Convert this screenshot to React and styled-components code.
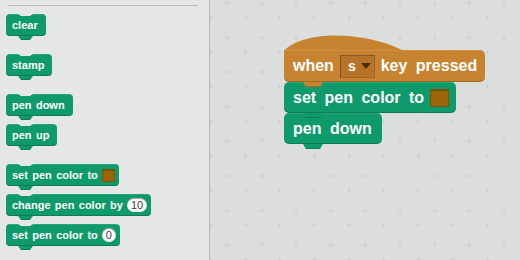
import React from 'react';
import styled, { createGlobalStyle, css } from 'styled-components';

const PEN = '#0f9a6c';
const PEN_DARK = '#0b7d57';
const EVENT = '#c88330';
const EVENT_DARK = '#a86b22';
const PALETTE_BG = '#e5e6e6';
const CANVAS_BG = '#dcdede';

const SIZES = {
  sm: { h: 22, font: 11, ws: 1.3, padL: 6, padR: 8, padRIn: 4, gap: 4, radius: 4, bumpL: 12, bumpW: 15, bumpH: 4, notchH: 2 },
  lg: { h: 31, font: 16, ws: 4, padL: 9, padR: 10, padRIn: 7, gap: 6, radius: 5, bumpL: 19, bumpW: 20, bumpH: 5, notchH: 3 },
};

const Global = createGlobalStyle`
  html, body { margin: 0; padding: 0; background: ${CANVAS_BG}; }
  body { font-family: "Liberation Sans", Arial, sans-serif; overflow: hidden; }
`;

const gridSvg = encodeURIComponent(
  `<svg xmlns="http://www.w3.org/2000/svg" width="34.6" height="34.6"><g stroke="#ccd0d0" stroke-width="1" fill="none"><path d="M4 1.5v5M1.5 4h5"/><path d="M22.3 16.1v5M19.8 18.6h5"/></g></svg>`
);

const Page = styled.div`
  display: grid;
  grid-template-columns: 210px 1fr;
  width: 520px;
  height: 260px;
  overflow: hidden;
`;

const Palette = styled.aside`
  box-sizing: border-box;
  background: ${PALETTE_BG};
  border-right: 1px solid #b7b9b9;
  display: flex;
  flex-direction: column;
  padding: 5px 0 0 6px;
`;

const Rule = styled.div`
  height: 1px;
  background: #bcbdbd;
  margin: 0 11px 0 2px;
`;

const BlockList = styled.div`
  display: flex;
  flex-direction: column;
  align-items: flex-start;
  gap: 18px;
  margin-top: 8px;
`;

const Group = styled.div`
  display: flex;
  flex-direction: column;
  align-items: flex-start;
  gap: 8px;
`;

const Canvas = styled.main`
  background-color: ${CANVAS_BG};
  background-image: url("data:image/svg+xml,${gridSvg}");
  background-size: 34.6px 34.6px;
  background-position: 13px -1px;
  padding: 35px 0 0 74px;
`;

const Script = styled.div`
  display: flex;
  flex-direction: column;
  align-items: flex-start;
`;

const Block = styled.div`
  position: relative;
  box-sizing: border-box;
  display: inline-flex;
  align-items: center;
  gap: ${p => SIZES[p.$size].gap}px;
  height: ${p => SIZES[p.$size].h + (p.$hat ? 1 : 0)}px;
  padding: 0 ${p => (p.$input ? SIZES[p.$size].padRIn : p.$hat ? SIZES[p.$size].padR - 2 : SIZES[p.$size].padR)}px 0 ${p => SIZES[p.$size].padL}px;
  background: ${p => p.$color};
  border-radius: ${p => (p.$hat ? `0 ${SIZES[p.$size].radius}px ${SIZES[p.$size].radius}px ${SIZES[p.$size].radius}px` : `${SIZES[p.$size].radius}px`)};
  color: #fff;
  font-weight: bold;
  font-size: ${p => SIZES[p.$size].font}px;
  word-spacing: ${p => SIZES[p.$size].ws}px;
  white-space: nowrap;
  box-shadow: inset 0 -1px 0 rgba(0, 0, 0, 0.2), inset 0 1px 0 rgba(255, 255, 255, 0.1);

  &::after {
    content: '';
    position: absolute;
    z-index: 1;
    left: ${p => SIZES[p.$size].bumpL}px;
    bottom: -${p => SIZES[p.$size].bumpH}px;
    width: ${p => SIZES[p.$size].bumpW}px;
    height: ${p => SIZES[p.$size].bumpH}px;
    background: linear-gradient(${p => p.$color} calc(100% - 1px), ${p => p.$dark} 0);
    clip-path: polygon(0 0, 100% 0, calc(100% - 3px) 100%, 3px 100%);
  }

  ${p =>
    p.$notch &&
    css`
      &::before {
        content: '';
        position: absolute;
        top: 0;
        left: ${SIZES[p.$size].bumpL}px;
        width: ${SIZES[p.$size].bumpW}px;
        height: ${SIZES[p.$size].notchH}px;
        background: ${p.$notch};
        clip-path: polygon(0 0, 100% 0, calc(100% - 3px) 100%, 3px 100%);
      }
    `}
`;

const Hat = styled.div`
  display: flex;
  flex-direction: column;
  align-items: stretch;
  position: relative;
  z-index: 2;
`;

const HatCap = styled.div`
  width: 120px;
  height: 16px;
  background: ${EVENT};
  margin-bottom: -1px;
  clip-path: path('M0 16 C 18 -4, 78 -5, 120 16 Z');
`;

const Swatch = styled.span`
  box-sizing: border-box;
  display: inline-block;
  width: ${p => (p.$size === 'lg' ? 19 : 13)}px;
  height: ${p => (p.$size === 'lg' ? 18 : 13)}px;
  background: #9c6508;
  border: 1px solid #7f5206;
  box-shadow: inset 0 1px 1px rgba(0, 0, 0, 0.25);
`;

const Oval = styled.span`
  box-sizing: border-box;
  display: inline-flex;
  align-items: center;
  justify-content: center;
  height: 14px;
  min-width: 12px;
  padding: 0 4px;
  border-radius: 7px;
  background: #fff;
  color: #3c3c3c;
  font-weight: normal;
  font-size: 11px;
  word-spacing: 0;
  box-shadow: inset 0 1px 1px rgba(0, 0, 0, 0.35);
`;

const Dropdown = styled.span`
  box-sizing: border-box;
  display: inline-flex;
  align-items: center;
  gap: 5px;
  height: 23px;
  padding: 0 4px 0 8px;
  background: #b5742a;
  box-shadow: inset 1px 1px 0 rgba(0, 0, 0, 0.25), inset -1px -1px 0 rgba(0, 0, 0, 0.12);
  font-size: 14px;
`;

const Caret = styled.span`
  width: 0;
  height: 0;
  border-left: 5px solid transparent;
  border-right: 5px solid transparent;
  border-top: 6px solid #4a2c0c;
`;

const PaletteBlock = ({ children, input }) => (
  <Block $size="sm" $color={PEN} $dark={PEN_DARK} $notch={PALETTE_BG} $input={input}>
    {children}
  </Block>
);

export default function App() {
  return (
    <>
      <Global />
      <Page>
        <Palette>
          <Rule />
          <BlockList>
            <Group>
              <PaletteBlock>clear</PaletteBlock>
            </Group>
            <Group>
              <PaletteBlock>stamp</PaletteBlock>
            </Group>
            <Group>
              <PaletteBlock>pen down</PaletteBlock>
              <PaletteBlock>pen up</PaletteBlock>
            </Group>
            <Group>
              <PaletteBlock input>
                <span>set pen color to</span>
                <Swatch $size="sm" />
              </PaletteBlock>
              <PaletteBlock input>
                <span>change pen color by</span>
                <Oval>10</Oval>
              </PaletteBlock>
              <PaletteBlock input>
                <span>set pen color to</span>
                <Oval>0</Oval>
              </PaletteBlock>
            </Group>
          </BlockList>
        </Palette>
        <Canvas>
          <Script>
            <Hat>
              <HatCap />
              <Block $size="lg" $hat $color={EVENT} $dark={EVENT_DARK}>
                <span>when</span>
                <Dropdown>
                  <span>s</span>
                  <Caret />
                </Dropdown>
                <span>key pressed</span>
              </Block>
            </Hat>
            <Block $size="lg" $color={PEN} $dark={PEN_DARK} $input>
              <span>set pen color to</span>
              <Swatch $size="lg" />
            </Block>
            <Block $size="lg" $color={PEN} $dark={PEN_DARK}>
              pen down
            </Block>
          </Script>
        </Canvas>
      </Page>
    </>
  );
}
